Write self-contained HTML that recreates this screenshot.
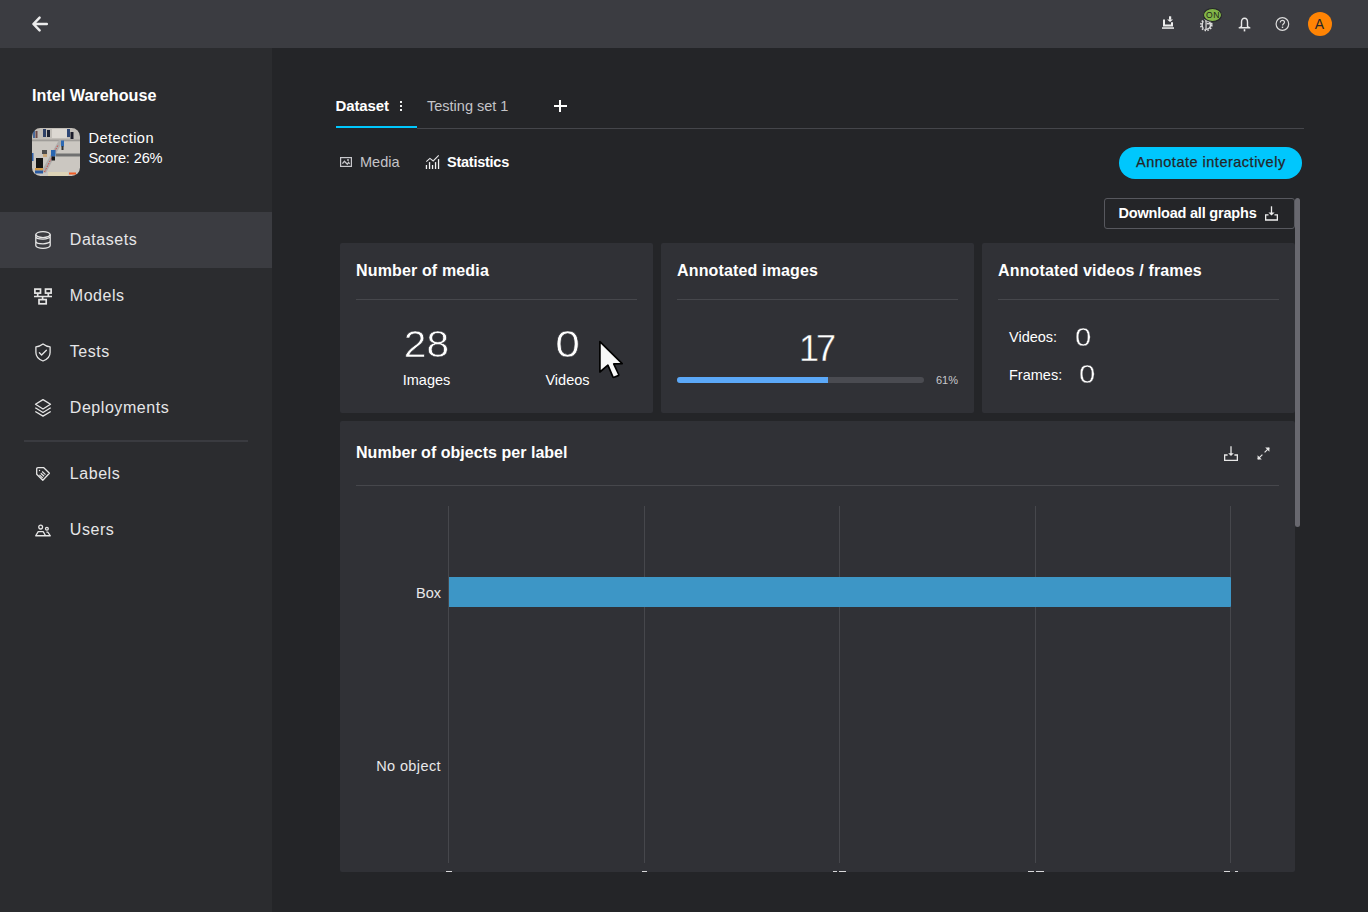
<!DOCTYPE html>
<html><head><meta charset="utf-8">
<style>
*{margin:0;padding:0;box-sizing:border-box}
html,body{width:1368px;height:912px;overflow:hidden;background:#242528;font-family:"Liberation Sans",sans-serif;color:#fff}
.a{position:absolute}
.t{position:absolute;white-space:nowrap;line-height:1}
svg{position:absolute;overflow:visible}
.nav{color:#e6e6e8;font-size:16px;letter-spacing:0.55px}
.ttl{font-size:16px;font-weight:bold;letter-spacing:0.15px}
.card{position:absolute;background:#303136;border-radius:2px}
.sep{position:absolute;height:1px;background:#46474c}
.big{-webkit-text-stroke:0.6px #303136}
.grid{position:absolute;top:506px;width:1px;height:357px;background:#46474c}
</style></head><body>
<!-- header -->
<div class="a" style="left:0;top:0;width:1368px;height:48px;background:#3b3c41"></div>
<svg style="left:32px;top:16px" width="16" height="16" viewBox="0 0 16 16"><path d="M7.6 1.6 L1.4 8 L7.6 14.4 M2 8 H14.8" fill="none" stroke="#ececec" stroke-width="2.5" stroke-linecap="round" stroke-linejoin="round"/></svg>

<!-- header right icons -->
<svg style="left:1162px;top:15.5px" width="12" height="13" viewBox="0 0 12 13"><path d="M2 3.5 V9.5 H10 V6.3" fill="none" stroke="#eee" stroke-width="2"/><rect x="0" y="11.3" width="12" height="1.5" fill="#eee"/><rect x="7" y="0.3" width="2.2" height="3.4" fill="#eee"/><path d="M5 3.5 H11.1 L8.05 6.1 Z" fill="#eee"/></svg>
<svg style="left:1200px;top:18px" width="13" height="13" viewBox="0 0 13 13"><circle cx="6.3" cy="7" r="4.2" fill="none" stroke="#dedede" stroke-width="1.5"/><circle cx="6.3" cy="7" r="5.5" fill="none" stroke="#dedede" stroke-width="1.6" stroke-dasharray="1.5 1.4"/><rect x="3.6" y="1.5" width="1.8" height="9.5" fill="#3b3c41"/><rect x="5.4" y="1.8" width="1.3" height="9" fill="#d0d0d0"/><rect x="6.7" y="4.8" width="5.4" height="1.6" fill="#d8d8d8"/></svg>
<div class="a" style="left:1203px;top:8px;width:19px;height:14px;border-radius:50%;background:#82b548;border:1px solid #232427"></div>
<div class="t" style="left:1206px;top:11.2px;font-size:8.6px;color:#1c2618;letter-spacing:0.5px">ON</div>
<svg style="left:1238px;top:16.5px" width="13" height="15" viewBox="0 0 13 15"><path d="M3.5 9.5 V5 C3.5 2.6 4.8 1.2 6.5 1.2 C8.2 1.2 9.5 2.6 9.5 5 V9.5 L11.8 10.8 H1.2 Z" fill="none" stroke="#e8e8e8" stroke-width="1.4" stroke-linejoin="round"/><rect x="5.7" y="12.2" width="1.6" height="2.2" fill="#e8e8e8"/></svg>
<svg style="left:1275px;top:17px" width="15" height="14" viewBox="0 0 15 14"><circle cx="7.4" cy="7" r="6.3" fill="none" stroke="#dcdcdc" stroke-width="1.2"/><path d="M5.3 5.6 C5.3 4.1 6.3 3.3 7.4 3.3 C8.6 3.3 9.5 4.1 9.5 5.2 C9.5 6.6 7.5 6.8 7.5 8.5" fill="none" stroke="#dcdcdc" stroke-width="1.2"/><rect x="6.8" y="9.6" width="1.4" height="1.4" fill="#dcdcdc"/></svg>
<div class="a" style="left:1308px;top:12px;width:24px;height:24px;border-radius:50%;background:#ff8404"></div>
<div class="t" style="left:1314.8px;top:17.2px;font-size:14px;color:#23252a">A</div>

<!-- sidebar -->
<div class="a" style="left:0;top:48px;width:272px;height:864px;background:#2b2c2f"></div>
<div class="t ttl" style="left:32px;top:87px;font-size:16.2px;letter-spacing:0">Intel Warehouse</div>
<svg style="left:32px;top:128px" width="48" height="48" viewBox="0 0 48 48">
<defs><clipPath id="thc"><rect x="0" y="0" width="48" height="48" rx="8.5"/></clipPath><filter id="bl"><feGaussianBlur stdDeviation="0.45"/></filter></defs>
<g clip-path="url(#thc)"><g filter="url(#bl)">
<rect x="-2" y="-2" width="52" height="52" fill="#cbc7c1"/>
<rect x="-2" y="-2" width="52" height="14" fill="#c2beb8"/>
<rect x="1" y="2" width="2" height="8" fill="#4a6a9a"/><rect x="3.5" y="3" width="2" height="7" fill="#6d4a4a"/>
<rect x="11" y="1" width="3" height="8" fill="#2d3f66"/><rect x="15" y="2" width="3" height="7" fill="#1d2433"/>
<rect x="20" y="1" width="15" height="9" fill="#dcd8d2"/>
<rect x="35" y="1" width="3" height="8" fill="#2e4775"/><rect x="38.5" y="4" width="3" height="7" fill="#1a1e29"/>
<rect x="0" y="11.5" width="48" height="1.8" fill="#9f9c98"/>
<path d="M9 44 L27 12 L31 12.5 L14 45 Z" fill="#aeadab"/>
<path d="M12.5 44 L26 17" stroke="#d24a48" stroke-width="1" stroke-dasharray="1.6 1.2"/>
<path d="M24 25.5 H48 V28.5 H24 Z" fill="#6f706f"/>
<rect x="29" y="12.5" width="3" height="6" fill="#2f6bb3"/><rect x="29.5" y="18" width="2" height="4" fill="#333"/>
<rect x="19" y="22" width="4.5" height="6.5" fill="#2a66b0"/><rect x="19.5" y="28.5" width="3.5" height="4" fill="#151515"/>
<rect x="10" y="22" width="5" height="4" fill="#4d4d4d"/><rect x="11" y="26" width="4" height="3" fill="#c9a77a"/>
<rect x="4" y="30" width="7" height="10" fill="#171717"/>
<rect x="3" y="40" width="8" height="2.5" fill="#d39b4a"/><rect x="3" y="42.5" width="8" height="3" fill="#2c5aa0"/>
<rect x="0" y="25" width="1.5" height="8" fill="#2f5fa8"/>
<rect x="16" y="44" width="20" height="4" fill="#ddd3b6"/>
<rect x="37" y="44.5" width="7" height="2" fill="#ef5a24"/>
</g></g></svg>
<div class="t" style="left:88.5px;top:130.8px;font-size:14.6px;letter-spacing:0.42px">Detection</div>
<div class="t" style="left:88.5px;top:151.4px;font-size:14.6px;letter-spacing:-0.15px">Score: 26%</div>

<div class="a" style="left:0;top:212px;width:272px;height:56px;background:#3b3c41"></div>
<!-- nav icons -->
<svg style="left:35px;top:231px" width="16" height="18" viewBox="0 0 16 18" fill="none" stroke="#e6e6e6" stroke-width="1.3"><ellipse cx="8" cy="3.6" rx="7.2" ry="3"/><path d="M0.8 3.6 V14.4 M15.2 3.6 V14.4 M0.8 5.2 A7.2 2.9 0 0 0 15.2 5.2 M0.8 9.9 A7.2 2.9 0 0 0 15.2 9.9 M0.8 14.4 A7.2 3 0 0 0 15.2 14.4"/></svg>
<svg style="left:34px;top:287.5px" width="18" height="17" viewBox="0 0 18 17" fill="none" stroke="#e6e6e6" stroke-width="1.7"><rect x="0.9" y="1.1" width="5.6" height="4"/><rect x="11.5" y="1.1" width="5.6" height="4"/><path d="M3.7 5 V8.5 M14.3 5 V8.5 M0 8.5 H18 M8.6 8.5 V11.5"/><rect x="5" y="11.6" width="7.2" height="4.2"/></svg>
<svg style="left:35px;top:342.5px" width="16" height="19" viewBox="0 0 16 19" fill="none" stroke="#e6e6e6" stroke-width="1.3" stroke-linejoin="round"><path d="M8 1 C6 2.6 3.5 3.6 0.9 3.8 V9.5 C0.9 13.4 4 16.5 8 18 C12 16.5 15.1 13.4 15.1 9.5 V3.8 C12.5 3.6 10 2.6 8 1 Z"/><path d="M4.4 9.8 L6.6 12 L11.4 7.2" stroke-linecap="round"/></svg>
<svg style="left:35px;top:398.5px" width="16" height="18" viewBox="0 0 16 18" fill="none" stroke="#e6e6e6" stroke-width="1.3" stroke-linejoin="round"><path d="M8 0.6 L15.5 5.3 L8 10 L0.5 5.3 Z"/><path d="M0.3 8.8 L8 13.5 L15.7 8.8 M0.3 12.5 L8 17.1 L15.7 12.5"/></svg>
<svg style="left:36px;top:467px" width="14" height="14" viewBox="0 0 14 14" fill="none" stroke="#e6e6e6" stroke-width="1.3" stroke-linejoin="round"><path d="M2 0.7 H7.8 L13.4 6.2 L6.8 13.3 L0.7 7.3 V2 Q0.7 0.7 2 0.7 Z"/><circle cx="3.5" cy="3.5" r="0.7" fill="#e6e6e6" stroke="none"/><path d="M6.2 4.5 L9.5 7.6 M4.8 6.2 L8.1 9.3 M3.4 7.9 L6.7 11" stroke-width="1.2"/></svg>
<svg style="left:35px;top:523.5px" width="16" height="13" viewBox="0 0 16 13" fill="none" stroke="#e6e6e6" stroke-width="1.3" stroke-linejoin="round"><circle cx="5.65" cy="3.1" r="1.9"/><circle cx="11.9" cy="4.8" r="1.4"/><path d="M0.7 11.75 L3.2 7.6 H8.2 L10.6 11.75 Z M11.4 8.2 H12.8 L15.3 11.75 H10.6"/></svg>

<div class="t nav" style="left:69.8px;top:232.0px">Datasets</div>
<div class="t nav" style="left:69.8px;top:288.0px">Models</div>
<div class="t nav" style="left:69.8px;top:344.0px">Tests</div>
<div class="t nav" style="left:69.8px;top:400.0px">Deployments</div>
<div class="a" style="left:24px;top:440px;width:224px;height:2px;background:#3a3b40"></div>
<div class="t nav" style="left:69.8px;top:466.0px">Labels</div>
<div class="t nav" style="left:69.8px;top:522.0px">Users</div>

<!-- tabs -->
<div class="t" style="left:335.5px;top:97.7px;font-size:15px;font-weight:bold;letter-spacing:-0.1px">Dataset</div>
<div class="a" style="left:400px;top:101px;width:2px;height:2px;background:#eee"></div>
<div class="a" style="left:400px;top:105px;width:2px;height:2px;background:#eee"></div>
<div class="a" style="left:400px;top:109px;width:2px;height:2px;background:#eee"></div>
<div class="t" style="left:427px;top:99px;font-size:14.5px;color:#c4c4c8">Testing set 1</div>
<div class="a" style="left:554px;top:105px;width:12.5px;height:2.2px;background:#fff"></div>
<div class="a" style="left:559px;top:100px;width:2.2px;height:12.4px;background:#fff"></div>
<div class="a" style="left:417px;top:128px;width:887px;height:1px;background:#45464b"></div>
<div class="a" style="left:336px;top:126px;width:81px;height:2px;background:#00c7fd"></div>

<svg style="left:340px;top:157px" width="12" height="10" viewBox="0 0 12 10" fill="none" stroke="#c8c8cc" stroke-width="1.2"><rect x="0.6" y="0.6" width="10.8" height="8.8"/><path d="M2.4 6.7 L4.4 4.3 L7.3 7.3 L8.5 5.3 L9.6 6.8" stroke-width="1.25"/><rect x="7.1" y="2.2" width="1.8" height="1.6" fill="#c8c8cc" stroke="none"/></svg>
<div class="t" style="left:360px;top:155px;font-size:14.5px;color:#c4c4c8">Media</div>
<svg style="left:425px;top:155px" width="15" height="14" viewBox="0 0 15 14" fill="#f2f2f2"><rect x="0.8" y="10" width="1.3" height="4"/><rect x="3.9" y="7.1" width="1.3" height="6.9"/><rect x="6.9" y="10" width="1.3" height="4"/><rect x="9.9" y="7.1" width="1.3" height="6.9"/><rect x="12.9" y="4.1" width="1.3" height="9.9"/><path d="M1.3 6.6 L4.9 3.4 L8.2 6 L13.7 0.3" fill="none" stroke="#e8e8ea" stroke-width="1.1"/></svg>
<div class="t" style="left:447px;top:155px;font-size:14.5px;font-weight:bold;letter-spacing:-0.25px">Statistics</div>

<div class="a" style="left:1119px;top:147px;width:183px;height:32px;border-radius:16px;background:#00c7fd"></div>
<div class="t" style="left:1136px;top:155px;font-size:14.5px;letter-spacing:0.5px;color:#242528;-webkit-text-stroke:0.25px #242528">Annotate interactively</div>

<div class="a" style="left:1104px;top:198px;width:191px;height:31px;border-radius:3px;border:1px solid #57585e"></div>
<div class="t" style="left:1118.5px;top:205.5px;font-size:14.5px;font-weight:bold;letter-spacing:-0.2px">Download all graphs</div>
<svg style="left:1265px;top:205.5px" width="13" height="15" viewBox="0 0 13 15" fill="none" stroke="#eee" stroke-width="1.3"><path d="M3.5 8.8 H0.65 V14 H12.35 V8.8 H9.5"/><path d="M6.5 0.3 V8.5"/><path d="M3.4 6.6 H9.6 L6.5 9.5 Z" fill="#eee" stroke="none"/></svg>

<!-- cards -->
<div class="card" style="left:340px;top:243px;width:313px;height:170px"></div>
<div class="card" style="left:661px;top:243px;width:313px;height:170px"></div>
<div class="card" style="left:982px;top:243px;width:313px;height:170px"></div>
<div class="card" style="left:340px;top:421px;width:955px;height:451px"></div>

<div class="t ttl" style="left:356px;top:263px">Number of media</div>
<div class="t ttl" style="left:677px;top:263px">Annotated images</div>
<div class="t ttl" style="left:998px;top:263px">Annotated videos / frames</div>
<div class="sep" style="left:356px;top:299px;width:281px"></div>
<div class="sep" style="left:677px;top:299px;width:281px"></div>
<div class="sep" style="left:998px;top:299px;width:281px"></div>

<div class="t big" style="left:356px;top:326px;width:141px;text-align:center;font-size:37px;transform:scaleX(1.1)">28</div>
<div class="t" style="left:356px;top:373px;width:141px;text-align:center;font-size:14.5px">Images</div>
<div class="t big" style="left:497px;top:326px;width:141px;text-align:center;font-size:37px;transform:scaleX(1.2)">0</div>
<div class="t" style="left:497px;top:373px;width:141px;text-align:center;font-size:14.5px">Videos</div>

<div class="t" style="left:677px;top:331px;width:281px;text-align:center;font-size:36px;letter-spacing:-3px;text-indent:-3px;-webkit-text-stroke:0.35px #303136">17</div>
<div class="a" style="left:677px;top:377px;width:247px;height:6px;border-radius:3px;background:#4a4b51"></div>
<div class="a" style="left:677px;top:377px;width:151px;height:6px;border-radius:3px 0 0 3px;background:#5ba8f8"></div>
<div class="t" style="left:936px;top:375px;font-size:11px;color:#c8c8cc">61%</div>

<div class="t" style="left:1009px;top:330px;font-size:14.5px">Videos:</div>
<div class="t" style="left:1075px;top:324.5px;font-size:25.5px;transform:scaleX(1.15);transform-origin:0 0;-webkit-text-stroke:0.35px #303136">0</div>
<div class="t" style="left:1009px;top:368px;font-size:14.5px">Frames:</div>
<div class="t" style="left:1079px;top:361.5px;font-size:25.5px;transform:scaleX(1.15);transform-origin:0 0;-webkit-text-stroke:0.35px #303136">0</div>

<!-- chart -->
<div class="t ttl" style="left:356px;top:445.3px;letter-spacing:0.03px">Number of objects per label</div>
<svg style="left:1224px;top:445.5px" width="14" height="15" viewBox="0 0 14 15" fill="none" stroke="#e8e8e8" stroke-width="1.3"><path d="M3.6 9 H0.65 V14.3 H13.35 V9 H10.4"/><path d="M7 0.3 V9"/><path d="M4.2 7.3 H9.8 L7 10 Z" fill="#e8e8e8" stroke="none"/></svg>
<svg style="left:1256.5px;top:446.5px" width="13" height="13" viewBox="0 0 13 13" fill="none" stroke="#e8e8e8" stroke-width="1.2"><path d="M7.6 5.4 L12.2 0.8 M0.8 12.2 L5.4 7.6"/><path d="M8.2 0.6 H12.4 V4.8 Z M0.6 8.2 V12.4 H4.8 Z" fill="#e8e8e8" stroke="none"/></svg>
<div class="sep" style="left:356px;top:485px;width:923px"></div>
<div class="grid" style="left:448px"></div>
<div class="grid" style="left:644px"></div>
<div class="grid" style="left:839px"></div>
<div class="grid" style="left:1035px"></div>
<div class="grid" style="left:1230px"></div>
<div class="a" style="left:449px;top:577px;width:782px;height:30px;border-radius:0 1px 1px 0;background:#3d96c6"></div>
<div class="t" style="left:300px;top:586px;width:141px;text-align:right;font-size:14.5px;color:#e8e8ea">Box</div>
<div class="t" style="left:300px;top:758.5px;width:141px;text-align:right;font-size:14.5px;letter-spacing:0.4px;color:#e8e8ea">No object</div>

<div class="a" style="left:446px;top:871px;width:6.0px;height:1px;background:#d8d8da"></div><div class="a" style="left:641.7px;top:871px;width:5.5px;height:1px;background:#d8d8da"></div><div class="a" style="left:833px;top:871px;width:4.0px;height:1px;background:#d8d8da"></div><div class="a" style="left:839px;top:871px;width:7.0px;height:1px;background:#d8d8da"></div><div class="a" style="left:1028.3px;top:871px;width:6.0px;height:1px;background:#d8d8da"></div><div class="a" style="left:1035.8px;top:871px;width:8.2px;height:1px;background:#d8d8da"></div><div class="a" style="left:1223.8px;top:871px;width:6.4px;height:1px;background:#d8d8da"></div><div class="a" style="left:1234.8px;top:871px;width:3.3px;height:1px;background:#d8d8da"></div>
<div class="a" style="left:1295px;top:198px;width:5px;height:329px;border-radius:3px;background:#68686f"></div>

<!-- cursor -->
<svg style="left:599px;top:340px" width="26" height="40" viewBox="0 0 26 40"><path d="M0.9 1.6 L0.9 32 L8.9 25.2 L13.9 36.8 Q14.3 37.6 15.1 37.3 L19.3 35.6 Q20 35.3 19.7 34.5 L14.7 23.9 L23.2 23.6 Z" fill="#f8f8f8" stroke="#000" stroke-width="1.7" stroke-linejoin="round"/></svg>
</body></html>
